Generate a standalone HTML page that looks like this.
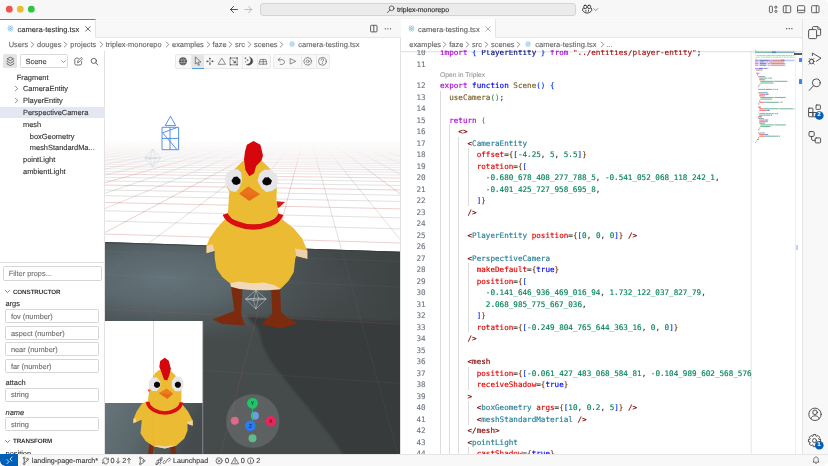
<!DOCTYPE html>
<html lang="en">
<head>
<meta charset="utf-8">
<title>camera-testing.tsx - triplex-monorepo</title>
<style>
*{box-sizing:border-box;margin:0;padding:0}
html,body{width:828px;height:466px;overflow:hidden;background:#fff}
body{position:relative;opacity:0.999;text-rendering:geometricPrecision;font-family:"Liberation Sans",sans-serif;font-size:7.3px;color:#3b3b3b}
.abs{position:absolute}
svg{overflow:visible}
.t{position:absolute;white-space:nowrap;line-height:10px;-webkit-text-stroke:0.12px currentColor}
#titlebar{left:0;top:0;width:828px;height:18.8px;background:linear-gradient(#f7f7f7 0,#f7f7f7 16.9px,#fcfcfc 17.3px,#fcfcfc 18.3px,#efefef 18.8px)}
.light{position:absolute;top:5.7px;width:6.8px;height:6.8px;border-radius:50%}
#search{left:259.5px;top:2.6px;width:316px;height:13.2px;background:#ebebeb;border:0.6px solid #d4d4d4;border-radius:3px}
#tabs{left:0;top:18.8px;width:802.3px;height:18.9px;background:#f8f8f8;border-bottom:0.6px solid #e5e5e5}
.tab{position:absolute;top:18.8px;height:19px;background:#fff;border-right:0.6px solid #e5e5e5}
#leftpanel{left:0;top:51px;width:105px;height:403px;background:#fff;border-right:0.6px solid #e2e2e2}
.inp{position:absolute;background:#fff;border:0.6px solid #d6d6d6;border-radius:1.5px}
#status{left:0;top:453.8px;width:828px;height:12.2px;background:#f8f8f8;border-top:0.6px solid #e5e5e5}
#activity{left:802.2px;top:18.8px;width:26px;height:435.2px;background:#f8f8f8;border-left:0.6px solid #e5e5e5}
#editor{left:401px;top:50.2px;width:401.3px;height:403.8px;background:#fff;overflow:hidden}
#edin{position:absolute;left:-401px;top:-50.2px;width:828px;height:466px}
.code{position:absolute;left:440px;white-space:pre;font-family:"DejaVu Sans Mono","Liberation Mono",monospace;font-size:7.62px;line-height:11.5px;height:11.5px;color:#3b3b3b;-webkit-text-stroke:0.15px currentColor}
.ln{position:absolute;left:401px;width:24.6px;text-align:right;font-family:"DejaVu Sans Mono","Liberation Mono",monospace;font-size:7.62px;line-height:11.5px;height:11.5px;color:#6e7681;-webkit-text-stroke:0.1px currentColor}
.k{color:#af00db}.b{color:#0000ff}.f{color:#795e26}.s{color:#a31515}.v{color:#001080}.n{color:#098658}.g{color:#800000}.c{color:#267f99}.a{color:#e50000}.y{color:#0431fa}.p{color:#319331}.z{color:#7b3814}
#mm i{position:absolute;height:1.15px;opacity:0.9}
</style>
</head>
<body>
<!-- scene -->
<svg class="abs" style="left:105px;top:51px;overflow:hidden" width="295.5" height="403" viewBox="105 51 295.5 403">
<defs>
<linearGradient id="fog" x1="0" y1="0" x2="0" y2="1" gradientUnits="objectBoundingBox">
<stop offset="0.000" stop-color="#fff" stop-opacity="1.00"/><stop offset="0.286" stop-color="#fff" stop-opacity="1.00"/><stop offset="0.371" stop-color="#fff" stop-opacity="0.94"/><stop offset="0.457" stop-color="#fff" stop-opacity="0.82"/><stop offset="0.571" stop-color="#fff" stop-opacity="0.58"/><stop offset="0.714" stop-color="#fff" stop-opacity="0.28"/><stop offset="0.857" stop-color="#fff" stop-opacity="0.08"/><stop offset="1.000" stop-color="#fff" stop-opacity="0.00"/>
</linearGradient>
<radialGradient id="fl" cx="165" cy="279" r="185" gradientUnits="userSpaceOnUse" gradientTransform="translate(165 279) scale(1 0.36) translate(-165 -279)">
<stop offset="0" stop-color="#64737a"/><stop offset="0.35" stop-color="#5b686d"/><stop offset="0.62" stop-color="#4f595c"/><stop offset="0.9" stop-color="#474d4e"/><stop offset="1" stop-color="#454a4b"/>
</radialGradient>
<linearGradient id="fl3" x1="300" y1="0" x2="400" y2="0" gradientUnits="userSpaceOnUse"><stop offset="0" stop-color="#000" stop-opacity="0"/><stop offset="1" stop-color="#000" stop-opacity="0.1"/></linearGradient>
<radialGradient id="fl2" cx="335" cy="285" r="80" gradientUnits="userSpaceOnUse" gradientTransform="translate(335 285) scale(1 0.5) translate(-335 -285)">
<stop offset="0" stop-color="#4a5153" stop-opacity="0.8"/><stop offset="1" stop-color="#444849" stop-opacity="0"/>
</radialGradient>
<filter id="bl" x="-20%" y="-20%" width="140%" height="140%"><feGaussianBlur stdDeviation="1.1"/></filter>
<clipPath id="flc"><polygon points="105,242.1 400.5,251.7 400.5,454 105,454"/></clipPath>
</defs>
<rect x="105" y="51" width="296" height="403" fill="#fff"/>
<path d="M-1910.9 176.1L93.0 129.9M-1899.3 176.5L95.5 129.9M-1875.8 177.3L100.5 129.9M-1863.7 177.7L103.0 129.9M-1839.1 178.5L108.1 130.0M-1826.5 178.9L110.6 130.0M-1800.6 179.7L115.7 130.0M-1787.4 180.1L118.2 130.0M-1760.4 181.0L123.3 130.0M-1746.5 181.5L125.9 130.0M-1718.2 182.4L131.0 130.0M-1703.6 182.9L133.6 130.0M-1673.8 183.8L138.7 130.0M-1658.6 184.3L141.3 130.0M-1627.2 185.3L146.4 130.0M-1611.1 185.9L149.0 130.0M-1578.1 186.9L154.2 130.0M-1561.2 187.5L156.8 130.0M-1526.4 188.6L162.0 130.0M-1508.5 189.2L164.6 130.0M-1471.8 190.4L169.9 130.0M-1452.9 191.0L172.5 130.0M-1414.0 192.3L177.7 130.1M-1394.0 192.9L180.4 130.1M-1352.9 194.2L185.6 130.1M-1331.7 194.9L188.3 130.1M-1288.0 196.4L193.6 130.1M-1265.5 197.1L196.2 130.1M-1219.1 198.6L201.5 130.1M-1195.1 199.4L204.2 130.1M-1145.7 201.0L209.6 130.1M-1120.1 201.8L212.2 130.1M-1067.3 203.5L217.6 130.1M-1040.0 204.4L220.3 130.1M-983.6 206.2L225.7 130.1M-954.4 207.2L228.4 130.1M-893.8 209.1L233.8 130.1M-862.5 210.2L236.5 130.1M-797.4 212.3L241.9 130.1M-763.7 213.4L244.7 130.1M-693.6 215.6L250.1 130.2M-657.1 216.8L252.9 130.2M-581.4 219.3L258.3 130.2M-541.9 220.6L261.1 130.2M-459.8 223.2L266.6 130.2M-416.9 224.6L269.4 130.2M-327.5 227.5L274.9 130.2M-280.9 229.0L277.7 130.2M-183.2 232.2L283.2 130.2M-132.2 233.9L286.0 130.2M-25.1 237.3L291.6 130.2M31.0 239.2L294.4 130.2M148.9 243.0L300.0 130.2M210.8 245.0L302.8 130.2M341.3 249.2L308.4 130.2M410.0 251.5L311.3 130.2M555.2 256.2L316.9 130.2M632.0 258.7L319.8 130.2M794.5 263.9L325.4 130.3M880.7 266.7L328.3 130.3M1063.8 272.7L334.0 130.3M1161.3 275.8L336.9 130.3M1369.4 282.6L342.6 130.3M1480.5 286.2L345.5 130.3M1718.9 293.9L351.2 130.3M1846.8 298.1L354.1 130.3M2122.6 307.0L359.9 130.3M2271.4 311.9L362.8 130.3M2594.2 322.3L368.6 130.3M2769.5 328.0L371.5 130.3M3152.3 340.4L377.4 130.3M3361.9 347.2L380.3 130.3M3823.3 362.2L386.2 130.3M4078.2 370.5L389.1 130.3M4645.2 388.9L395.0 130.4M4961.8 399.1L397.9 130.4M5675.2 422.3L403.9 130.4M6079.1 435.4L406.8 130.4M7004.0 465.4L412.8 130.4M100.0 220.87L405.0 229.02M100.0 210.63L405.0 217.91M100.0 195.56L405.0 201.56M100.0 189.85L405.0 195.37M100.0 180.82L405.0 185.57M100.0 177.19L405.0 181.63M100.0 171.18L405.0 175.10M100.0 168.66L405.0 172.38M100.0 164.38L405.0 167.72M100.0 162.53L405.0 165.72M100.0 159.32L405.0 162.24M100.0 157.91L405.0 160.71M100.0 155.41L405.0 158.00M100.0 154.30L405.0 156.79M100.0 152.31L405.0 154.63M100.0 151.41L405.0 153.65M100.0 149.78L405.0 151.88M100.0 149.03L405.0 151.08M100.0 147.67L405.0 149.60M100.0 147.05L405.0 148.93M100.0 145.90L405.0 147.68M100.0 145.37L405.0 147.10M100.0 144.38L405.0 146.03M100.0 143.93L405.0 145.54M100.0 143.07L405.0 144.61M100.0 142.68L405.0 144.18M100.0 141.93L405.0 143.37M100.0 141.58L405.0 142.99M100.0 140.92L405.0 142.27M100.0 140.61L405.0 141.94M100.0 140.03L405.0 141.30M100.0 139.75L405.0 141.00M100.0 139.23L405.0 140.44M100.0 138.98L405.0 140.17M100.0 138.51L405.0 139.66M100.0 138.28L405.0 139.41M100.0 137.86L405.0 138.95M100.0 137.65L405.0 138.73M100.0 137.27L405.0 138.31M100.0 137.08L405.0 138.11M100.0 136.73L405.0 137.73M100.0 136.56L405.0 137.54M100.0 136.24L405.0 137.19M100.0 136.08L405.0 137.02M100.0 135.78L405.0 136.70M100.0 135.64L405.0 136.54M100.0 135.36L405.0 136.25M100.0 135.23L405.0 136.10M100.0 134.98L405.0 135.83M100.0 134.85L405.0 135.69M100.0 134.62L405.0 135.44M100.0 134.50L405.0 135.31M100.0 134.28L405.0 135.07M100.0 134.18L405.0 134.96M100.0 133.97L405.0 134.74M100.0 133.87L405.0 134.63M100.0 133.68L405.0 134.42M100.0 133.59L405.0 134.32M100.0 133.41L405.0 134.12M100.0 133.32L405.0 134.03M100.0 133.15L405.0 133.84M100.0 133.07L405.0 133.76M100.0 132.91L405.0 133.58M100.0 132.83L405.0 133.50M100.0 132.68L405.0 133.34M100.0 132.61L405.0 133.26M100.0 132.47L405.0 133.10M100.0 132.40L405.0 133.03M100.0 132.27L405.0 132.88M100.0 132.20L405.0 132.81M100.0 132.07L405.0 132.67M100.0 132.01L405.0 132.61M100.0 131.89L405.0 132.48M100.0 131.83L405.0 132.41M100.0 131.72L405.0 132.29M100.0 131.66L405.0 132.23M100.0 131.55L405.0 132.11M100.0 131.50L405.0 132.05M100.0 131.40L405.0 131.94M100.0 131.35L405.0 131.88" stroke="#868686" stroke-width="0.36" fill="none" opacity="0.7"/>
<path d="M-1922.2 175.8L90.5 129.9M-1887.6 176.9L98.0 129.9M-1851.5 178.1L105.6 130.0M-1813.6 179.3L113.1 130.0M-1774.0 180.6L120.8 130.0M-1732.5 181.9L128.4 130.0M-1688.9 183.3L136.1 130.0M-1643.0 184.8L143.9 130.0M-1594.8 186.4L151.6 130.0M-1544.0 188.0L159.4 130.0M-1490.3 189.8L167.2 130.0M-1433.7 191.6L175.1 130.0M-1373.7 193.6L183.0 130.1M-1310.1 195.6L190.9 130.1M-1242.5 197.8L198.9 130.1M-1170.6 200.2L206.9 130.1M-1094.0 202.6L214.9 130.1M-1012.1 205.3L223.0 130.1M-924.5 208.1L231.1 130.1M-830.4 211.2L239.2 130.1M-729.1 214.5L247.4 130.1M-619.8 218.0L255.6 130.2M-501.4 221.9L263.8 130.2M-372.9 226.0L272.1 130.2M-232.8 230.6L280.4 130.2M-79.5 235.6L288.8 130.2M89.0 241.0L297.2 130.2M274.9 247.1L305.6 130.2M481.3 253.8L314.1 130.2M711.6 261.2L322.6 130.3M970.4 269.6L331.1 130.3M1263.1 279.1L339.7 130.3M1596.9 290.0L348.3 130.3M1981.2 302.4L357.0 130.3M2428.4 316.9L365.7 130.3M2955.2 334.0L374.4 130.3M3585.1 354.5L383.2 130.3M4351.4 379.3L392.0 130.3M5304.0 410.3L400.9 130.4M6520.2 449.7L409.8 130.4M100.0 233.89L405.0 243.15M100.0 202.37L405.0 208.95M100.0 185.00L405.0 190.10M100.0 174.00L405.0 178.17M100.0 166.41L405.0 169.93M100.0 160.85L405.0 163.90M100.0 156.61L405.0 159.30M100.0 153.27L405.0 155.67M100.0 150.57L405.0 152.74M100.0 148.33L405.0 150.32M100.0 146.46L405.0 148.28M100.0 144.87L405.0 146.55M100.0 143.49L405.0 145.06M100.0 142.29L405.0 143.76M100.0 141.24L405.0 142.62M100.0 140.31L405.0 141.61M100.0 139.48L405.0 140.71M100.0 138.74L405.0 139.91M100.0 138.07L405.0 139.18M100.0 137.46L405.0 138.52M100.0 136.90L405.0 137.92M100.0 136.40L405.0 137.36M100.0 135.93L405.0 136.86M100.0 135.50L405.0 136.39M100.0 135.10L405.0 135.96M100.0 134.74L405.0 135.56M100.0 134.39L405.0 135.19M100.0 134.07L405.0 134.85M100.0 133.78L405.0 134.52M100.0 133.50L405.0 134.22M100.0 133.24L405.0 133.94M100.0 132.99L405.0 133.67M100.0 132.76L405.0 133.42M100.0 132.54L405.0 133.18M100.0 132.33L405.0 132.96M100.0 132.14L405.0 132.74M100.0 131.95L405.0 132.54M100.0 131.77L405.0 132.35M100.0 131.61L405.0 132.17M100.0 131.45L405.0 132.00" stroke="#c25050" stroke-width="0.42" fill="none" opacity="0.66"/>
<rect x="105" y="120" width="296" height="70" fill="url(#fog)"/>
<polygon points="105,242.1 400.5,251.7 400.5,454 105,454" fill="#454a4b"/>
<g clip-path="url(#flc)">
<rect x="105" y="235" width="296" height="220" fill="url(#fl)"/>
<rect x="105" y="235" width="296" height="220" fill="url(#fl2)"/>
<rect x="300" y="235" width="101" height="90" fill="url(#fl3)"/>
<polygon points="247.0,316.6 252.0,322.0 258.0,328.0 261.0,337.0 262.5,345.0 270.0,360.0 280.4,373.7 295.0,392.0 310.6,410.6 334.0,440.7 346.0,458.0 406.0,458.0 406.0,321.8 290.0,318.3" fill="#393a3a" filter="url(#bl)"/>
<path d="M-329.9 227.9L-1374.9 396.7M-283.1 229.4L-1290.1 407.6M-185.1 232.6L-1098.4 432.3M-133.9 234.3L-989.4 446.3M-26.5 237.8L-738.5 478.6M29.9 239.6L-593.2 497.3M148.2 243.5L-251.0 541.3M210.4 245.5L-47.6 567.5M341.5 249.8L446.7 631.1M410.5 252.0L751.4 670.3M556.4 256.8L1528.1 770.2M633.5 259.3L2034.0 835.3M796.9 264.6L3429.3 1014.8M883.6 267.4L4429.8 1143.5M1067.9 273.5L7652.3 1558.1M1166.0 276.6L10498.7 1924.3M100.0 464.22L405.0 493.06M100.0 363.37L405.0 383.64M100.0 274.49L405.0 287.20M100.0 251.00L405.0 261.71" stroke="#9aa4a6" stroke-width="0.4" fill="none" opacity="0.2"/>
<path d="M-375.3 226.4L-1453.4 386.6M-234.8 231.0L-1198.2 419.5M-81.0 236.0L-869.9 461.7M88.1 241.5L-431.6 518.1M274.8 247.6L183.0 597.2M482.1 254.4L1107.1 716.1M713.6 261.9L2653.4 915.0M973.8 270.4L5768.5 1315.8M100.0 308.75L405.0 324.37" stroke="#a8605c" stroke-width="0.45" fill="none" opacity="0.5"/>
<path d="M105 242.5L400.5 252.1" stroke="#353a3c" stroke-width="1" opacity="0.7"/>
</g>
<g stroke="#3b7cf0" stroke-width="0.85" fill="none" stroke-linejoin="round"><path d="M170.5 116.2L165.2 125.6H175.6Z"/><rect x="162" y="127.3" width="16.6" height="22.4"/><path d="M170 127.3V149.7M162 138.4H178.6M176.8 127.6L162.6 132.8L176.8 149.4"/></g>
<g stroke="#b8ccd8" stroke-width="0.45" fill="none" opacity="0.8"><path d="M152.6 149L144.8 158L152.6 167L160.8 158ZM144.8 158H160.8M152.6 149L150 158.8L152.6 167M152.6 149L155.6 157.4L152.6 167M144.8 158L150 158.8L160.8 158M144.8 158L155.6 157.4"/></g>
<polygon points="231,286 242.5,288.5 241.2,314.5 244.8,325.4 222.5,323.9 212.2,319.4 234.3,311" fill="#7d2b0e"/>
<polygon points="271.3,289.5 280.2,288.5 281,311.7 284.5,315.3 297.1,323.7 280.8,328.2 262,324.5 272.3,313.4" fill="#7d2b0e"/>
<g stroke="#e4e8ea" stroke-width="0.45" fill="none" opacity="0.9"><path d="M255.9 290.2L245.6 299L255.9 309L266.2 299ZM245.6 299H266.2M255.9 290.2L253.5 300.5L255.9 309M255.9 290.2L258.6 298L255.9 309M245.6 299L253.5 300.5L266.2 299M245.6 299L258.6 298L266.2 299"/></g>
<polygon points="276.5,201.3 285,202 279.2,207.6 277,208" fill="#e01616"/>
<polygon points="224.7,219.6 216.7,228.3 209.5,238.5 206.6,245.7 206.6,253.0 214.6,250.8 214.7,258.0 216.5,268.7 222.5,277.3 230.2,283.6 238.0,285.5 252.0,286.5 267.0,288.6 280.8,288.8 288.6,280.8 293.7,272.2 295.4,258.0 296.4,255.9 307.3,258.8 307.3,250.8 302.2,238.5 293.6,228.3 281.7,218.9" fill="#ebbb33"/>
<polygon points="230.2,283.3 238,281.6 251.7,283.3 263.7,282.5 274,285 280.8,288.8 279,289.6 267,290.2 253.4,290.2 239.6,289 231,286.8" fill="#f1d8b6"/>
<polygon points="206.6,245.7 212.4,244.3 214.6,250.8 206.6,253.2" fill="#efd2ad"/>
<polygon points="295,248.6 307.3,250.8 307.3,258.8 296.4,255.9" fill="#efd2ad"/>
<polygon points="236.3,167.5 243.0,160.7 262.3,161.2 269.6,168.2 276.8,189.0 276.4,200.0 278.3,211.0 280.0,216.0 253.0,226.0 226.0,216.0 228.0,211.7 229.0,195.0 229.5,191.9 226.1,185.6 228.0,176.0" fill="#ebbb33"/>
<path d="M225.2 214C227.8 222.6 244 227 253 227C263 227 278.2 223 280.8 214.2" stroke="#d90d12" stroke-width="5.3" fill="none" stroke-linecap="butt"/>
<polygon points="246.9,144.8 253.6,141.1 260.4,144.8 263.0,155.4 261.4,160.7 256.1,166.0 254.1,173.3 249.3,176.2 245.4,169.9 244.0,159.3 245.0,151.5" fill="#d5060c"/>
<polygon points="227.1,172.6 231.9,169.7 237.7,169.2 241.1,172.6 242.1,180.8 239.2,188.0 235.8,191.9 230.5,190.9 226.1,185.6 225.1,178.8" fill="#e6e6e8"/>
<polygon points="259.4,173.5 264.3,169.7 271.0,169.7 276.8,174.5 278.3,180.8 276.8,187.5 272.0,190.9 266.2,191.9 261.4,188.0 259.4,184.2 257.5,180.8" fill="#e6e6e8"/>
<polygon points="231.4,180.8 233.8,176.9 237.2,176.6 240.6,179.8 240.3,183.2 236.7,184.9 233.4,184.2" fill="#050505"/>
<polygon points="262.1,181.3 264.8,177.4 268.6,177.2 272.0,180.8 270.6,184.2 266.7,185.6 263.3,184.2" fill="#050505"/>
<polygon points="239.2,193.8 248.3,186.6 259.9,194.3 249.3,201.1" fill="#e66d17"/>
<polygon points="239.2,193.8 248.3,186.6 259.9,194.3 249,194.6" fill="#ea741a"/>
<g>
<rect x="105" y="321" width="97.7" height="133" fill="#fff"/>
<linearGradient id="pf" x1="0" y1="0" x2="1" y2="0.25"><stop offset="0" stop-color="#66757a"/><stop offset="0.45" stop-color="#5a676b"/><stop offset="1" stop-color="#454b4d"/></linearGradient>
<rect x="105" y="403" width="97.7" height="51" fill="url(#pf)"/>
<path d="M153.6 321V403" stroke="#b5b5b5" stroke-width="0.5"/>
<path d="M153.6 403V454" stroke="#9aa4a6" stroke-width="0.4" opacity="0.45"/>
<path d="M202.9 321V454" stroke="#9a9fa0" stroke-width="0.5" opacity="0.8"/>
<polygon points="149.5,444 154,445 152.9,454 148,454" fill="#7d2b0e"/>
<polygon points="170.7,446 174.6,445.5 176.6,454 170.6,454" fill="#7d2b0e"/>
<polygon points="146.9,401.2 141.8,403.7 136.6,411.5 133.4,419.2 133.4,423.3 141.8,419.8 140.5,433.4 145.6,441.1 153.4,446.3 164.9,448.4 176.5,445.6 184.3,438.5 187.5,430.8 187.5,423.7 192.7,425.8 192.7,420.5 188.1,411.5 181.7,403.7 164.0,398.0" fill="#ebbb33"/>
<polygon points="133.4,419.2 135.6,418 136.4,421.8 133.4,423.3" fill="#efd2ad"/>
<polygon points="187.5,421.6 192.7,420.5 192.7,425.8 187.5,423.7" fill="#efd2ad"/>
<polygon points="153.4,446.3 158,445.4 164.9,446.6 171,445.4 176.5,445.6 164.9,448.4" fill="#f1d8b6"/>
<polygon points="155.1,373.2 159.0,370.0 171.2,371.3 175.7,375.8 181.5,390.6 181.3,403.5 165.0,412.0 147.6,402.2 149.3,390.6 150.4,381.0" fill="#ebbb33"/>
<path d="M153.6 395V446" stroke="#d6a72b" stroke-width="0.4" opacity="0.6"/>
<polygon points="147.6,389.8 149.6,389.6 149.4,392.4" fill="#e01616"/>
<path d="M147.6 402C148.6 409 158 413 164.9 413C172 413 180.6 409 181.4 402.4" stroke="#d90d12" stroke-width="3.7" fill="none"/>
<polygon points="160.2,361.0 164.7,357.8 168.6,360.4 170.9,368.7 169.3,375.2 167.3,380.3 164.1,379.7 161.5,372.6 159.3,366.8" fill="#d5060c"/>
<polygon points="160.2,387.0 156.9,390.9 152.1,390.9 148.8,387.0 148.8,381.4 152.1,377.5 156.9,377.5 160.2,381.4" fill="#e6e6e8"/>
<polygon points="183.4,386.9 180.0,391.2 175.2,391.2 171.8,386.9 171.8,380.9 175.2,376.6 180.0,376.6 183.4,380.9" fill="#e6e6e8"/>
<polygon points="160.0,386.0 158.2,387.8 155.8,387.8 154.0,386.0 154.0,383.6 155.8,381.8 158.2,381.8 160.0,383.6" fill="#050505"/>
<polygon points="180.9,386.0 179.1,387.8 176.7,387.8 174.9,386.0 174.9,383.6 176.7,381.8 179.1,381.8 180.9,383.6" fill="#050505"/>
<polygon points="159,393.2 166.7,388.7 173.1,393.8 167.3,399" fill="#e66d17"/>
<polygon points="159,393.2 166.7,388.7 173.1,393.8 166.5,394" fill="#ef7c1c"/>
</g>
<circle cx="252.8" cy="421" r="26.7" fill="#fff" opacity="0.13"/>
<circle cx="254.9" cy="415.8" r="4" fill="#6d9be6"/>
<circle cx="234.8" cy="420.7" r="4" fill="#e2688a"/>
<circle cx="252.5" cy="438.3" r="4" fill="#5fbd8c"/>
<path d="M252.5 421V403.3" stroke="#22c46b" stroke-width="0.8"/>
<path d="M252.5 421.3H270.9" stroke="#e8265c" stroke-width="0.8"/>
<circle cx="252.5" cy="403.3" r="5.4" fill="#22c46b"/>
<circle cx="270.9" cy="421.3" r="5.3" fill="#e8265c"/>
<circle cx="250.3" cy="425.8" r="5.3" fill="#2b7bf2"/>
<text x="252.5" y="405.3" text-anchor="middle" fill="#0b5a2f" style="font-family:'Liberation Sans',sans-serif;font-size:5.4px;font-weight:bold">Y</text>
<text x="270.9" y="423.3" text-anchor="middle" fill="#7c0d2c" style="font-family:'Liberation Sans',sans-serif;font-size:5.4px;font-weight:bold">X</text>
<text x="250.3" y="427.8" text-anchor="middle" fill="#0d3a86" style="font-family:'Liberation Sans',sans-serif;font-size:5.4px;font-weight:bold">Z</text>
</svg>
<!-- editor -->
<div id="editor" class="abs"><div id="edin">
<div class="ln" style="top:47px">10</div>
<div class="code" style="top:47px"><span class="k">import</span> <span class="y">{</span> <span class="v">PlayerEntity</span> <span class="y">}</span> <span class="k">from</span> <span class="s">&quot;../entities/player-entity&quot;</span>;</div>
<div class="ln" style="top:59px">11</div>
<div class="ln" style="top:80px">12</div>
<div class="code" style="top:80px"><span class="k">export</span> <span class="b">function</span> <span class="f">Scene</span><span class="y">()</span> <span class="y">{</span></div>
<div class="ln" style="top:92px">13</div>
<div class="code" style="top:92px">  <span class="f">useCamera</span><span class="p">()</span>;</div>
<div class="ln" style="top:103px">14</div>
<div class="ln" style="top:115px">15</div>
<div class="code" style="top:115px">  <span class="k">return</span> <span class="p">(</span></div>
<div class="ln" style="top:126px">16</div>
<div class="code" style="top:126px">    <span class="g">&lt;&gt;</span></div>
<div class="ln" style="top:138px">17</div>
<div class="code" style="top:138px">      <span class="g">&lt;</span><span class="c">CameraEntity</span></div>
<div class="ln" style="top:149px">18</div>
<div class="code" style="top:149px">        <span class="a">offset</span>=<span class="z">{</span><span class="y">[</span><span class="n">-4.25</span>, <span class="n">5</span>, <span class="n">5.5</span><span class="y">]</span><span class="z">}</span></div>
<div class="ln" style="top:161px">19</div>
<div class="code" style="top:161px">        <span class="a">rotation</span>=<span class="z">{</span><span class="y">[</span></div>
<div class="ln" style="top:172px">20</div>
<div class="code" style="top:172px">          <span class="n">-0.680_678_408_277_788_5</span>, <span class="n">-0.541_052_068_118_242_1</span>,</div>
<div class="ln" style="top:184px">21</div>
<div class="code" style="top:184px">          <span class="n">-0.401_425_727_958_695_8</span>,</div>
<div class="ln" style="top:195px">22</div>
<div class="code" style="top:195px">        <span class="y">]</span><span class="z">}</span></div>
<div class="ln" style="top:207px">23</div>
<div class="code" style="top:207px">      <span class="g">/&gt;</span></div>
<div class="ln" style="top:218px">24</div>
<div class="ln" style="top:230px">25</div>
<div class="code" style="top:230px">      <span class="g">&lt;</span><span class="c">PlayerEntity</span> <span class="a">position</span>=<span class="z">{</span><span class="y">[</span><span class="n">0</span>, <span class="n">0</span>, <span class="n">0</span><span class="y">]</span><span class="z">}</span> <span class="g">/&gt;</span></div>
<div class="ln" style="top:241px">26</div>
<div class="ln" style="top:253px">27</div>
<div class="code" style="top:253px">      <span class="g">&lt;</span><span class="c">PerspectiveCamera</span></div>
<div class="ln" style="top:264px">28</div>
<div class="code" style="top:264px">        <span class="a">makeDefault</span>=<span class="z">{</span><span class="b">true</span><span class="z">}</span></div>
<div class="ln" style="top:276px">29</div>
<div class="code" style="top:276px">        <span class="a">position</span>=<span class="z">{</span><span class="y">[</span></div>
<div class="ln" style="top:287px">30</div>
<div class="code" style="top:287px">          <span class="n">-0.141_646_936_469_016_94</span>, <span class="n">1.732_122_037_827_79</span>,</div>
<div class="ln" style="top:299px">31</div>
<div class="code" style="top:299px">          <span class="n">2.068_985_775_667_036</span>,</div>
<div class="ln" style="top:310px">32</div>
<div class="code" style="top:310px">        <span class="y">]</span><span class="z">}</span></div>
<div class="ln" style="top:322px">33</div>
<div class="code" style="top:322px">        <span class="a">rotation</span>=<span class="z">{</span><span class="y">[</span><span class="n">-0.249_804_765_644_363_16</span>, <span class="n">0</span>, <span class="n">0</span><span class="y">]</span><span class="z">}</span></div>
<div class="ln" style="top:333px">34</div>
<div class="code" style="top:333px">      <span class="g">/&gt;</span></div>
<div class="ln" style="top:345px">35</div>
<div class="ln" style="top:356px">36</div>
<div class="code" style="top:356px">      <span class="g">&lt;mesh</span></div>
<div class="ln" style="top:368px">37</div>
<div class="code" style="top:368px">        <span class="a">position</span>=<span class="z">{</span><span class="y">[</span><span class="n">-0.061_427_483_068_584_81</span>, <span class="n">-0.104_989_602_568_576_53</span>, <span class="n">-3.5</span><span class="y">]</span><span class="z">}</span></div>
<div class="ln" style="top:379px">38</div>
<div class="code" style="top:379px">        <span class="a">receiveShadow</span>=<span class="z">{</span><span class="b">true</span><span class="z">}</span></div>
<div class="ln" style="top:391px">39</div>
<div class="code" style="top:391px">      <span class="g">&gt;</span></div>
<div class="ln" style="top:402px">40</div>
<div class="code" style="top:402px">        <span class="g">&lt;</span><span class="c">boxGeometry</span> <span class="a">args</span>=<span class="z">{</span><span class="y">[</span><span class="n">10</span>, <span class="n">0.2</span>, <span class="n">5</span><span class="y">]</span><span class="z">}</span> <span class="g">/&gt;</span></div>
<div class="ln" style="top:414px">41</div>
<div class="code" style="top:414px">        <span class="g">&lt;</span><span class="c">meshStandardMaterial</span> <span class="g">/&gt;</span></div>
<div class="ln" style="top:425px">42</div>
<div class="code" style="top:425px">      <span class="g">&lt;/mesh&gt;</span></div>
<div class="ln" style="top:437px">43</div>
<div class="code" style="top:437px">      <span class="g">&lt;</span><span class="c">pointLight</span></div>
<div class="ln" style="top:448px">44</div>
<div class="code" style="top:448px">        <span class="a">castShadow</span>=<span class="z">{</span><span class="b">true</span><span class="z">}</span></div>
<div class="abs" style="left:440.00px;top:90.71px;width:0.55px;height:368.35px;background:#dcdcdc"></div>
<div class="abs" style="left:449.18px;top:125.23px;width:0.55px;height:333.82px;background:#dcdcdc"></div>
<div class="abs" style="left:458.36px;top:136.74px;width:0.55px;height:322.32px;background:#dcdcdc"></div>
<div class="abs" style="left:467.54px;top:148.25px;width:0.55px;height:57.63px;background:#dcdcdc"></div>
<div class="abs" style="left:467.54px;top:263.33px;width:0.55px;height:69.14px;background:#dcdcdc"></div>
<div class="abs" style="left:467.54px;top:366.90px;width:0.55px;height:23.11px;background:#dcdcdc"></div>
<div class="abs" style="left:467.54px;top:401.42px;width:0.55px;height:23.11px;background:#dcdcdc"></div>
<div class="abs" style="left:467.54px;top:447.46px;width:0.55px;height:11.60px;background:#dcdcdc"></div>
<div class="t" style="left:440px;top:71px;font-size:6.7px;color:#999">Open in Triplex</div>
<div class="abs" style="left:752px;top:51px;width:50.3px;height:403px;background:#fff;box-shadow:-1px 0 2px rgba(0,0,0,0.10)"></div>
<svg class="abs" style="left:752px;top:48px" width="50" height="110" viewBox="752 48 50 110"><rect x="755" y="51.61" width="39.6" height="1.5" fill="#7d9dff" opacity="0.75"/><rect x="772" y="51.61" width="4" height="1.5" fill="#2f62ff" opacity="0.9"/><rect x="755" y="59.68" width="39.6" height="1.5" fill="#a9bcf8" opacity="0.8"/><rect x="781" y="59.68" width="3.4" height="1.5" fill="#3b6cff" opacity="0.9"/><rect x="755.00" y="50.25" width="1.59" height="0.85" fill="#72c472" opacity="0.75"/><rect x="755.53" y="51.86" width="0.53" height="0.85" fill="#72c472" opacity="0.75"/><rect x="756.59" y="51.86" width="4.78" height="0.85" fill="#72c472" opacity="0.75"/><rect x="761.90" y="51.86" width="1.59" height="0.85" fill="#72c472" opacity="0.75"/><rect x="764.03" y="51.86" width="3.72" height="0.85" fill="#72c472" opacity="0.75"/><rect x="768.27" y="51.86" width="4.25" height="0.85" fill="#72c472" opacity="0.75"/><rect x="773.05" y="51.86" width="1.59" height="0.85" fill="#72c472" opacity="0.75"/><rect x="775.18" y="51.86" width="3.19" height="0.85" fill="#72c472" opacity="0.75"/><rect x="778.89" y="51.86" width="4.78" height="0.85" fill="#72c472" opacity="0.75"/><rect x="784.21" y="51.86" width="2.12" height="0.85" fill="#72c472" opacity="0.75"/><rect x="786.86" y="51.86" width="3.19" height="0.85" fill="#72c472" opacity="0.75"/><rect x="790.58" y="51.86" width="2.12" height="0.85" fill="#72c472" opacity="0.75"/><rect x="793.23" y="51.86" width="1.06" height="0.85" fill="#72c472" opacity="0.75"/><rect x="755.53" y="53.48" width="0.53" height="0.85" fill="#72c472" opacity="0.75"/><rect x="755.53" y="55.09" width="0.53" height="0.85" fill="#72c472" opacity="0.75"/><rect x="756.59" y="55.09" width="2.12" height="0.85" fill="#72c472" opacity="0.75"/><rect x="759.25" y="55.09" width="3.19" height="0.85" fill="#72c472" opacity="0.75"/><rect x="762.97" y="55.09" width="2.12" height="0.85" fill="#72c472" opacity="0.75"/><rect x="765.62" y="55.09" width="1.06" height="0.85" fill="#72c472" opacity="0.75"/><rect x="767.21" y="55.09" width="4.25" height="0.85" fill="#72c472" opacity="0.75"/><rect x="771.99" y="55.09" width="2.66" height="0.85" fill="#72c472" opacity="0.75"/><rect x="775.18" y="55.09" width="1.59" height="0.85" fill="#72c472" opacity="0.75"/><rect x="777.30" y="55.09" width="3.72" height="0.85" fill="#72c472" opacity="0.75"/><rect x="781.55" y="55.09" width="3.72" height="0.85" fill="#72c472" opacity="0.75"/><rect x="785.80" y="55.09" width="2.66" height="0.85" fill="#72c472" opacity="0.75"/><rect x="788.98" y="55.09" width="1.06" height="0.85" fill="#72c472" opacity="0.75"/><rect x="790.58" y="55.09" width="1.59" height="0.85" fill="#72c472" opacity="0.75"/><rect x="792.70" y="55.09" width="1.80" height="0.85" fill="#72c472" opacity="0.75"/><rect x="755.53" y="56.70" width="0.53" height="0.85" fill="#72c472" opacity="0.75"/><rect x="756.59" y="56.70" width="2.12" height="0.85" fill="#72c472" opacity="0.75"/><rect x="759.25" y="56.70" width="1.06" height="0.85" fill="#72c472" opacity="0.75"/><rect x="760.84" y="56.70" width="1.59" height="0.85" fill="#72c472" opacity="0.75"/><rect x="762.97" y="56.70" width="2.12" height="0.85" fill="#72c472" opacity="0.75"/><rect x="765.62" y="56.70" width="4.78" height="0.85" fill="#72c472" opacity="0.75"/><rect x="770.93" y="56.70" width="1.06" height="0.85" fill="#72c472" opacity="0.75"/><rect x="772.52" y="56.70" width="2.12" height="0.85" fill="#72c472" opacity="0.75"/><rect x="775.18" y="56.70" width="3.19" height="0.85" fill="#72c472" opacity="0.75"/><rect x="778.89" y="56.70" width="2.12" height="0.85" fill="#72c472" opacity="0.75"/><rect x="781.55" y="56.70" width="1.59" height="0.85" fill="#72c472" opacity="0.75"/><rect x="783.67" y="56.70" width="2.66" height="0.85" fill="#72c472" opacity="0.75"/><rect x="786.86" y="56.70" width="2.66" height="0.85" fill="#72c472" opacity="0.75"/><rect x="790.05" y="56.70" width="2.66" height="0.85" fill="#72c472" opacity="0.75"/><rect x="793.23" y="56.70" width="1.27" height="0.85" fill="#72c472" opacity="0.75"/><rect x="755.53" y="58.31" width="1.06" height="0.85" fill="#72c472" opacity="0.75"/><rect x="755.00" y="59.83" width="3.19" height="1.10" fill="#dc7ff0"/><rect x="758.72" y="59.83" width="0.53" height="1.10" fill="#6a86ff"/><rect x="759.78" y="59.83" width="9.03" height="1.10" fill="#7a84c0"/><rect x="769.34" y="59.83" width="0.53" height="1.10" fill="#6a86ff"/><rect x="770.40" y="59.83" width="2.12" height="1.10" fill="#dc7ff0"/><rect x="773.05" y="59.83" width="10.09" height="1.10" fill="#d88a8a"/><rect x="783.14" y="59.83" width="0.53" height="1.10" fill="#9a9a9a"/><rect x="755.00" y="61.44" width="3.19" height="1.10" fill="#dc7ff0"/><rect x="758.72" y="61.44" width="0.53" height="1.10" fill="#6a86ff"/><rect x="759.78" y="61.44" width="4.78" height="1.10" fill="#7a84c0"/><rect x="765.09" y="61.44" width="0.53" height="1.10" fill="#6a86ff"/><rect x="766.15" y="61.44" width="2.12" height="1.10" fill="#dc7ff0"/><rect x="768.81" y="61.44" width="14.87" height="1.10" fill="#d88a8a"/><rect x="783.67" y="61.44" width="0.53" height="1.10" fill="#9a9a9a"/><rect x="755.00" y="63.05" width="3.19" height="1.10" fill="#dc7ff0"/><rect x="758.72" y="63.05" width="0.53" height="1.10" fill="#6a86ff"/><rect x="759.78" y="63.05" width="6.37" height="1.10" fill="#7a84c0"/><rect x="766.68" y="63.05" width="0.53" height="1.10" fill="#6a86ff"/><rect x="767.74" y="63.05" width="2.12" height="1.10" fill="#dc7ff0"/><rect x="770.40" y="63.05" width="14.34" height="1.10" fill="#d88a8a"/><rect x="784.74" y="63.05" width="0.53" height="1.10" fill="#9a9a9a"/><rect x="755.00" y="64.67" width="3.19" height="1.10" fill="#dc7ff0"/><rect x="758.72" y="64.67" width="0.53" height="1.10" fill="#6a86ff"/><rect x="759.78" y="64.67" width="6.37" height="1.10" fill="#7a84c0"/><rect x="766.68" y="64.67" width="0.53" height="1.10" fill="#6a86ff"/><rect x="767.74" y="64.67" width="2.12" height="1.10" fill="#dc7ff0"/><rect x="770.40" y="64.67" width="14.34" height="1.10" fill="#d88a8a"/><rect x="784.74" y="64.67" width="0.53" height="1.10" fill="#9a9a9a"/><rect x="755.00" y="67.89" width="3.19" height="1.10" fill="#dc7ff0"/><rect x="758.72" y="67.89" width="4.25" height="1.10" fill="#6d6dff"/><rect x="763.50" y="67.89" width="2.66" height="1.10" fill="#b09a6a"/><rect x="766.15" y="67.89" width="1.06" height="1.10" fill="#6a86ff"/><rect x="767.74" y="67.89" width="0.53" height="1.10" fill="#6a86ff"/><rect x="756.06" y="69.51" width="4.78" height="1.10" fill="#b09a6a"/><rect x="760.84" y="69.51" width="1.06" height="1.10" fill="#84c684"/><rect x="761.90" y="69.51" width="0.53" height="1.10" fill="#9a9a9a"/><rect x="756.06" y="72.73" width="3.19" height="1.10" fill="#dc7ff0"/><rect x="759.78" y="72.73" width="0.53" height="1.10" fill="#84c684"/><rect x="757.12" y="74.34" width="1.06" height="1.10" fill="#c46a6a"/><rect x="758.19" y="75.96" width="0.53" height="1.10" fill="#c46a6a"/><rect x="758.72" y="75.96" width="6.37" height="1.10" fill="#86b6c8"/><rect x="759.25" y="77.57" width="3.19" height="1.10" fill="#f27878"/><rect x="762.43" y="77.57" width="0.53" height="1.10" fill="#9a9a9a"/><rect x="762.97" y="77.57" width="0.53" height="1.10" fill="#b08f7c"/><rect x="763.50" y="77.57" width="0.53" height="1.10" fill="#6a86ff"/><rect x="764.03" y="77.57" width="2.66" height="1.10" fill="#74bd9c"/><rect x="766.68" y="77.57" width="0.53" height="1.10" fill="#9a9a9a"/><rect x="767.74" y="77.57" width="0.53" height="1.10" fill="#74bd9c"/><rect x="768.27" y="77.57" width="0.53" height="1.10" fill="#9a9a9a"/><rect x="769.34" y="77.57" width="1.59" height="1.10" fill="#74bd9c"/><rect x="770.93" y="77.57" width="0.53" height="1.10" fill="#6a86ff"/><rect x="771.46" y="77.57" width="0.53" height="1.10" fill="#b08f7c"/><rect x="759.25" y="79.18" width="4.25" height="1.10" fill="#f27878"/><rect x="763.50" y="79.18" width="0.53" height="1.10" fill="#9a9a9a"/><rect x="764.03" y="79.18" width="0.53" height="1.10" fill="#b08f7c"/><rect x="764.56" y="79.18" width="0.53" height="1.10" fill="#6a86ff"/><rect x="760.31" y="80.80" width="12.74" height="1.10" fill="#74bd9c"/><rect x="773.05" y="80.80" width="0.53" height="1.10" fill="#9a9a9a"/><rect x="774.12" y="80.80" width="12.74" height="1.10" fill="#74bd9c"/><rect x="786.86" y="80.80" width="0.53" height="1.10" fill="#9a9a9a"/><rect x="760.31" y="82.41" width="12.74" height="1.10" fill="#74bd9c"/><rect x="773.05" y="82.41" width="0.53" height="1.10" fill="#9a9a9a"/><rect x="759.25" y="84.02" width="0.53" height="1.10" fill="#6a86ff"/><rect x="759.78" y="84.02" width="0.53" height="1.10" fill="#b08f7c"/><rect x="758.19" y="85.64" width="1.06" height="1.10" fill="#c46a6a"/><rect x="758.19" y="88.86" width="0.53" height="1.10" fill="#c46a6a"/><rect x="758.72" y="88.86" width="6.37" height="1.10" fill="#86b6c8"/><rect x="765.62" y="88.86" width="4.25" height="1.10" fill="#f27878"/><rect x="769.87" y="88.86" width="0.53" height="1.10" fill="#9a9a9a"/><rect x="770.40" y="88.86" width="0.53" height="1.10" fill="#b08f7c"/><rect x="770.93" y="88.86" width="0.53" height="1.10" fill="#6a86ff"/><rect x="771.46" y="88.86" width="0.53" height="1.10" fill="#74bd9c"/><rect x="771.99" y="88.86" width="0.53" height="1.10" fill="#9a9a9a"/><rect x="773.05" y="88.86" width="0.53" height="1.10" fill="#74bd9c"/><rect x="773.58" y="88.86" width="0.53" height="1.10" fill="#9a9a9a"/><rect x="774.65" y="88.86" width="0.53" height="1.10" fill="#74bd9c"/><rect x="775.18" y="88.86" width="0.53" height="1.10" fill="#6a86ff"/><rect x="775.71" y="88.86" width="0.53" height="1.10" fill="#b08f7c"/><rect x="776.77" y="88.86" width="1.06" height="1.10" fill="#c46a6a"/><rect x="758.19" y="92.09" width="0.53" height="1.10" fill="#c46a6a"/><rect x="758.72" y="92.09" width="9.03" height="1.10" fill="#86b6c8"/><rect x="759.25" y="93.70" width="5.84" height="1.10" fill="#f27878"/><rect x="765.09" y="93.70" width="0.53" height="1.10" fill="#9a9a9a"/><rect x="765.62" y="93.70" width="0.53" height="1.10" fill="#b08f7c"/><rect x="766.15" y="93.70" width="2.12" height="1.10" fill="#6d6dff"/><rect x="768.27" y="93.70" width="0.53" height="1.10" fill="#b08f7c"/><rect x="759.25" y="95.31" width="4.25" height="1.10" fill="#f27878"/><rect x="763.50" y="95.31" width="0.53" height="1.10" fill="#9a9a9a"/><rect x="764.03" y="95.31" width="0.53" height="1.10" fill="#b08f7c"/><rect x="764.56" y="95.31" width="0.53" height="1.10" fill="#6a86ff"/><rect x="760.31" y="96.93" width="13.28" height="1.10" fill="#74bd9c"/><rect x="773.58" y="96.93" width="0.53" height="1.10" fill="#9a9a9a"/><rect x="774.65" y="96.93" width="10.62" height="1.10" fill="#74bd9c"/><rect x="785.27" y="96.93" width="0.53" height="1.10" fill="#9a9a9a"/><rect x="760.31" y="98.54" width="11.15" height="1.10" fill="#74bd9c"/><rect x="771.46" y="98.54" width="0.53" height="1.10" fill="#9a9a9a"/><rect x="759.25" y="100.15" width="0.53" height="1.10" fill="#6a86ff"/><rect x="759.78" y="100.15" width="0.53" height="1.10" fill="#b08f7c"/><rect x="759.25" y="101.77" width="4.25" height="1.10" fill="#f27878"/><rect x="763.50" y="101.77" width="0.53" height="1.10" fill="#9a9a9a"/><rect x="764.03" y="101.77" width="0.53" height="1.10" fill="#b08f7c"/><rect x="764.56" y="101.77" width="0.53" height="1.10" fill="#6a86ff"/><rect x="765.09" y="101.77" width="13.28" height="1.10" fill="#74bd9c"/><rect x="778.36" y="101.77" width="0.53" height="1.10" fill="#9a9a9a"/><rect x="779.43" y="101.77" width="0.53" height="1.10" fill="#74bd9c"/><rect x="779.96" y="101.77" width="0.53" height="1.10" fill="#9a9a9a"/><rect x="781.02" y="101.77" width="0.53" height="1.10" fill="#74bd9c"/><rect x="781.55" y="101.77" width="0.53" height="1.10" fill="#6a86ff"/><rect x="782.08" y="101.77" width="0.53" height="1.10" fill="#b08f7c"/><rect x="758.19" y="103.38" width="1.06" height="1.10" fill="#c46a6a"/><rect x="758.19" y="106.60" width="2.66" height="1.10" fill="#c46a6a"/><rect x="759.25" y="108.22" width="4.25" height="1.10" fill="#f27878"/><rect x="763.50" y="108.22" width="0.53" height="1.10" fill="#9a9a9a"/><rect x="764.03" y="108.22" width="0.53" height="1.10" fill="#b08f7c"/><rect x="764.56" y="108.22" width="0.53" height="1.10" fill="#6a86ff"/><rect x="765.09" y="108.22" width="13.28" height="1.10" fill="#74bd9c"/><rect x="778.36" y="108.22" width="0.53" height="1.10" fill="#9a9a9a"/><rect x="779.43" y="108.22" width="13.28" height="1.10" fill="#74bd9c"/><rect x="792.70" y="108.22" width="0.53" height="1.10" fill="#9a9a9a"/><rect x="793.76" y="108.22" width="0.74" height="1.10" fill="#74bd9c"/><rect x="759.25" y="109.83" width="6.90" height="1.10" fill="#f27878"/><rect x="766.15" y="109.83" width="0.53" height="1.10" fill="#9a9a9a"/><rect x="766.68" y="109.83" width="0.53" height="1.10" fill="#b08f7c"/><rect x="767.21" y="109.83" width="2.12" height="1.10" fill="#6d6dff"/><rect x="769.34" y="109.83" width="0.53" height="1.10" fill="#b08f7c"/><rect x="758.19" y="111.44" width="0.53" height="1.10" fill="#c46a6a"/><rect x="759.25" y="113.06" width="0.53" height="1.10" fill="#c46a6a"/><rect x="759.78" y="113.06" width="5.84" height="1.10" fill="#86b6c8"/><rect x="766.15" y="113.06" width="2.12" height="1.10" fill="#f27878"/><rect x="768.27" y="113.06" width="0.53" height="1.10" fill="#9a9a9a"/><rect x="768.81" y="113.06" width="0.53" height="1.10" fill="#b08f7c"/><rect x="769.34" y="113.06" width="0.53" height="1.10" fill="#6a86ff"/><rect x="769.87" y="113.06" width="1.06" height="1.10" fill="#74bd9c"/><rect x="770.93" y="113.06" width="0.53" height="1.10" fill="#9a9a9a"/><rect x="771.99" y="113.06" width="1.59" height="1.10" fill="#74bd9c"/><rect x="773.58" y="113.06" width="0.53" height="1.10" fill="#9a9a9a"/><rect x="774.65" y="113.06" width="0.53" height="1.10" fill="#74bd9c"/><rect x="775.18" y="113.06" width="0.53" height="1.10" fill="#6a86ff"/><rect x="775.71" y="113.06" width="0.53" height="1.10" fill="#b08f7c"/><rect x="776.77" y="113.06" width="1.06" height="1.10" fill="#c46a6a"/><rect x="759.25" y="114.67" width="0.53" height="1.10" fill="#c46a6a"/><rect x="759.78" y="114.67" width="10.62" height="1.10" fill="#86b6c8"/><rect x="770.93" y="114.67" width="1.06" height="1.10" fill="#c46a6a"/><rect x="758.19" y="116.28" width="3.72" height="1.10" fill="#c46a6a"/><rect x="758.19" y="117.90" width="0.53" height="1.10" fill="#c46a6a"/><rect x="758.72" y="117.90" width="5.31" height="1.10" fill="#86b6c8"/><rect x="759.25" y="119.51" width="5.31" height="1.10" fill="#f27878"/><rect x="764.56" y="119.51" width="0.53" height="1.10" fill="#9a9a9a"/><rect x="765.09" y="119.51" width="0.53" height="1.10" fill="#b08f7c"/><rect x="765.62" y="119.51" width="2.12" height="1.10" fill="#6d6dff"/><rect x="767.74" y="119.51" width="0.53" height="1.10" fill="#b08f7c"/><rect x="759.25" y="121.12" width="4.78" height="1.10" fill="#f27878"/><rect x="764.03" y="121.12" width="0.53" height="1.10" fill="#9a9a9a"/><rect x="764.56" y="121.12" width="0.53" height="1.10" fill="#b08f7c"/><rect x="765.09" y="121.12" width="2.12" height="1.10" fill="#74bd9c"/><rect x="767.21" y="121.12" width="0.53" height="1.10" fill="#b08f7c"/><rect x="759.25" y="122.73" width="4.25" height="1.10" fill="#f27878"/><rect x="763.50" y="122.73" width="0.53" height="1.10" fill="#9a9a9a"/><rect x="764.03" y="122.73" width="0.53" height="1.10" fill="#b08f7c"/><rect x="764.56" y="122.73" width="0.53" height="1.10" fill="#6a86ff"/><rect x="760.31" y="124.35" width="13.28" height="1.10" fill="#74bd9c"/><rect x="773.58" y="124.35" width="0.53" height="1.10" fill="#9a9a9a"/><rect x="774.65" y="124.35" width="10.62" height="1.10" fill="#74bd9c"/><rect x="785.27" y="124.35" width="0.53" height="1.10" fill="#9a9a9a"/><rect x="760.31" y="125.96" width="9.56" height="1.10" fill="#74bd9c"/><rect x="769.87" y="125.96" width="0.53" height="1.10" fill="#9a9a9a"/><rect x="759.25" y="127.57" width="0.53" height="1.10" fill="#6a86ff"/><rect x="759.78" y="127.57" width="0.53" height="1.10" fill="#b08f7c"/><rect x="758.19" y="129.19" width="1.06" height="1.10" fill="#c46a6a"/><rect x="758.19" y="132.41" width="0.53" height="1.10" fill="#c46a6a"/><rect x="758.72" y="132.41" width="6.37" height="1.10" fill="#86b6c8"/><rect x="759.25" y="134.03" width="5.31" height="1.10" fill="#f27878"/><rect x="764.56" y="134.03" width="0.53" height="1.10" fill="#9a9a9a"/><rect x="765.09" y="134.03" width="0.53" height="1.10" fill="#b08f7c"/><rect x="765.62" y="134.03" width="2.12" height="1.10" fill="#6d6dff"/><rect x="767.74" y="134.03" width="0.53" height="1.10" fill="#b08f7c"/><rect x="759.25" y="135.64" width="4.78" height="1.10" fill="#f27878"/><rect x="764.03" y="135.64" width="0.53" height="1.10" fill="#9a9a9a"/><rect x="764.56" y="135.64" width="0.53" height="1.10" fill="#b08f7c"/><rect x="765.09" y="135.64" width="12.74" height="1.10" fill="#74bd9c"/><rect x="777.83" y="135.64" width="0.53" height="1.10" fill="#b08f7c"/><rect x="778.89" y="135.64" width="1.06" height="1.10" fill="#6a86ff"/><rect x="758.19" y="137.25" width="1.06" height="1.10" fill="#c46a6a"/><rect x="757.12" y="138.87" width="1.59" height="1.10" fill="#c46a6a"/><rect x="756.06" y="140.48" width="0.53" height="1.10" fill="#84c684"/><rect x="756.59" y="140.48" width="0.53" height="1.10" fill="#9a9a9a"/><rect x="755.00" y="142.09" width="0.53" height="1.10" fill="#6a86ff"/></svg>
<div class="abs" style="left:794.6px;top:51px;width:0.6px;height:403px;background:#f0f0f0"></div>
<div class="abs" style="left:799.1px;top:57.9px;width:2.7px;height:4.5px;background:#3b82f6;border-radius:0.5px"></div>
<div class="abs" style="left:799.1px;top:79.1px;width:2.7px;height:4.8px;background:#3b82f6;border-radius:0.5px"></div>
<div class="abs" style="left:796.4px;top:245px;width:1.6px;height:5px;background:#bcd3f5"></div>
<div class="abs" style="left:794.2px;top:53.2px;width:7.6px;height:1.5px;background:#5a5a5a"></div>
</div></div>
<div class="abs" style="left:401px;top:51px;width:401px;height:2.4px;background:linear-gradient(rgba(0,0,0,0.13),rgba(0,0,0,0))"></div>
<div class="abs" style="left:400.4px;top:18.8px;width:0.7px;height:435px;background:#e2e2e2"></div>
<!-- chrome -->
<div id="titlebar" class="abs"></div>
<svg class="abs" style="left:0;top:0" width="40" height="19" viewBox="0 0 40 19"><circle cx="9.3" cy="9.2" r="3.4" fill="#ef5350"/><circle cx="20.3" cy="9.2" r="3.4" fill="#ecbc2e"/><circle cx="31.3" cy="9.2" r="3.4" fill="#2cc63f"/></svg>
<div id="search" class="abs"></div>
<svg class="abs" style="left:228px;top:4px" width="28" height="11" viewBox="228 4 28 11" fill="none" stroke-linecap="round" stroke-linejoin="round"><path d="M237.4 9.5H230.6M233.6 6.4L230.5 9.5L233.6 12.6" stroke="#3b3b3b" stroke-width="0.9"/><path d="M244.8 9.5H251.6M248.6 6.4L251.7 9.5L248.6 12.6" stroke="#b5b5b5" stroke-width="0.9"/></svg>
<svg class="abs" style="left:386px;top:4px" width="10" height="11" viewBox="386 4 10 11" fill="none" stroke="#3b3b3b" stroke-width="0.75" stroke-linecap="round"><circle cx="391.6" cy="8.3" r="2.4"/><path d="M389.9 10.1L387.4 12.7"/></svg>
<div class="t" style="left:397.00px;top:6px;font-size:6.95px;color:#2f2f2f;-webkit-text-stroke:0.15px #2f2f2f;">triplex-monorepo</div>
<svg class="abs" style="left:582px;top:4px" width="18" height="11" viewBox="582 4 18 11"><g fill="none" stroke="#2b2b2b" stroke-width="0.95" stroke-linejoin="round" stroke-linecap="round"><rect x="583.7" y="5.3" width="3.1" height="3.2" rx="1.3"/><rect x="587.6" y="5.3" width="3.1" height="3.2" rx="1.3"/><path d="M583.1 8.3C582.7 8.8 582.6 9.4 582.7 10.6C583.8 12.2 585.6 13 587.2 13C588.8 13 590.6 12.2 591.7 10.6C591.8 9.4 591.7 8.8 591.3 8.3"/><path d="M585.9 10.1V11.2M588.5 10.1V11.2" stroke-width="0.85"/></g><path d="M593.8 8.6L595.8 10.6L597.8 8.6" fill="none" stroke="#555" stroke-width="0.7" stroke-linecap="round" stroke-linejoin="round"/></svg>
<svg class="abs" style="left:768px;top:4px" width="54" height="11" viewBox="768 4 54 11" fill="none" stroke="#3b3b3b" stroke-width="0.8" stroke-linejoin="round"><rect x="769.4" y="6.2" width="3" height="6.3" rx="0.8"/><circle cx="775.9" cy="7.2" r="1.1"/><circle cx="775.9" cy="11.4" r="1.1"/><rect x="783.3" y="5.7" width="7.4" height="7" rx="1"/><path d="M786 5.7V12.7"/><rect x="797.5" y="5.7" width="7.2" height="7" rx="1"/><path d="M797.5 10.3H804.7"/><rect x="811.6" y="5.7" width="7.4" height="7" rx="1"/><path d="M816.3 5.7V12.7"/></svg>
<div id="tabs" class="abs"></div>
<div class="tab" style="left:0;width:95.5px;border-top:1.2px solid #3d86d6"></div>
<svg class="abs" style="left:7.05px;top:25.35px" width="6.90" height="6.90" viewBox="-5 -5 10 10"><g fill="none" stroke="#56a6d6" stroke-width="0.62" opacity="0.78"><ellipse rx="4.7" ry="1.85"/><ellipse rx="4.7" ry="1.85" transform="rotate(60)"/><ellipse rx="4.7" ry="1.85" transform="rotate(120)"/></g><circle r="0.8" fill="#56a6d6"/></svg>
<div class="t" style="left:17.60px;top:25px;font-size:7.55px;color:#333;">camera-testing.tsx</div>
<svg class="abs" style="left:84px;top:25px" width="8" height="8" viewBox="0 0 8 8"><path d="M1.6 1.6L6.2 6.2M6.2 1.6L1.6 6.2" stroke="#3b3b3b" stroke-width="0.75" stroke-linecap="round"/></svg>
<div class="tab" style="left:401px;width:94.5px"></div>
<svg class="abs" style="left:407.85px;top:25.35px" width="6.90" height="6.90" viewBox="-5 -5 10 10"><g fill="none" stroke="#56a6d6" stroke-width="0.62" opacity="0.78"><ellipse rx="4.7" ry="1.85"/><ellipse rx="4.7" ry="1.85" transform="rotate(60)"/><ellipse rx="4.7" ry="1.85" transform="rotate(120)"/></g><circle r="0.8" fill="#56a6d6"/></svg>
<div class="t" style="left:418.00px;top:25px;font-size:7.55px;color:#5f5f5f;">camera-testing.tsx</div>
<svg class="abs" style="left:483.5px;top:24.6px" width="8" height="8" viewBox="0 0 8 8"><path d="M1.6 1.6L6.2 6.2M6.2 1.6L1.6 6.2" stroke="#8a8a8a" stroke-width="0.7" stroke-linecap="round"/></svg>
<svg class="abs" style="left:369px;top:24px" width="24" height="10" viewBox="369 24 24 10" fill="none" stroke="#3b3b3b" stroke-width="0.8"><rect x="370.6" y="25.3" width="6.4" height="6.6" rx="0.8"/><path d="M373.8 25.3V31.9"/><g fill="#3b3b3b" stroke="none"><circle cx="385.3" cy="28.8" r="0.65"/><circle cx="387.9" cy="28.8" r="0.65"/><circle cx="390.5" cy="28.8" r="0.65"/></g></svg>
<svg class="abs" style="left:784px;top:26px" width="10" height="6" viewBox="784 26 10 6"><g fill="#3b3b3b"><circle cx="786.7" cy="28.7" r="0.65"/><circle cx="789.3" cy="28.7" r="0.65"/><circle cx="791.9" cy="28.7" r="0.65"/></g></svg>
<div class="t" style="left:8.75px;top:40px;font-size:7.45px;color:#686868;">Users</div>
<svg class="abs" style="left:30.00px;top:41.00px" width="5" height="7" viewBox="-2.5 -3.5 5 7"><path d="M-1.1 -2.3L1.2 0L-1.1 2.3" fill="none" stroke="#6b6b6b" stroke-width="0.70" stroke-linecap="round" stroke-linejoin="round" transform="scale(1.10)"/></svg>
<div class="t" style="left:37.00px;top:40px;font-size:7.45px;color:#686868;">douges</div>
<svg class="abs" style="left:63.25px;top:41.00px" width="5" height="7" viewBox="-2.5 -3.5 5 7"><path d="M-1.1 -2.3L1.2 0L-1.1 2.3" fill="none" stroke="#6b6b6b" stroke-width="0.70" stroke-linecap="round" stroke-linejoin="round" transform="scale(1.10)"/></svg>
<div class="t" style="left:70.25px;top:40px;font-size:7.45px;color:#686868;">projects</div>
<svg class="abs" style="left:98.50px;top:41.00px" width="5" height="7" viewBox="-2.5 -3.5 5 7"><path d="M-1.1 -2.3L1.2 0L-1.1 2.3" fill="none" stroke="#6b6b6b" stroke-width="0.70" stroke-linecap="round" stroke-linejoin="round" transform="scale(1.10)"/></svg>
<div class="t" style="left:105.75px;top:40px;font-size:7.45px;color:#686868;">triplex-monorepo</div>
<svg class="abs" style="left:165.00px;top:41.00px" width="5" height="7" viewBox="-2.5 -3.5 5 7"><path d="M-1.1 -2.3L1.2 0L-1.1 2.3" fill="none" stroke="#6b6b6b" stroke-width="0.70" stroke-linecap="round" stroke-linejoin="round" transform="scale(1.10)"/></svg>
<div class="t" style="left:172.00px;top:40px;font-size:7.45px;color:#686868;">examples</div>
<svg class="abs" style="left:205.50px;top:41.00px" width="5" height="7" viewBox="-2.5 -3.5 5 7"><path d="M-1.1 -2.3L1.2 0L-1.1 2.3" fill="none" stroke="#6b6b6b" stroke-width="0.70" stroke-linecap="round" stroke-linejoin="round" transform="scale(1.10)"/></svg>
<div class="t" style="left:212.50px;top:40px;font-size:7.45px;color:#686868;">faze</div>
<svg class="abs" style="left:228.00px;top:41.00px" width="5" height="7" viewBox="-2.5 -3.5 5 7"><path d="M-1.1 -2.3L1.2 0L-1.1 2.3" fill="none" stroke="#6b6b6b" stroke-width="0.70" stroke-linecap="round" stroke-linejoin="round" transform="scale(1.10)"/></svg>
<div class="t" style="left:235.00px;top:40px;font-size:7.45px;color:#686868;">src</div>
<svg class="abs" style="left:246.75px;top:41.00px" width="5" height="7" viewBox="-2.5 -3.5 5 7"><path d="M-1.1 -2.3L1.2 0L-1.1 2.3" fill="none" stroke="#6b6b6b" stroke-width="0.70" stroke-linecap="round" stroke-linejoin="round" transform="scale(1.10)"/></svg>
<div class="t" style="left:254.00px;top:40px;font-size:7.45px;color:#686868;">scenes</div>
<svg class="abs" style="left:279.25px;top:41.00px" width="5" height="7" viewBox="-2.5 -3.5 5 7"><path d="M-1.1 -2.3L1.2 0L-1.1 2.3" fill="none" stroke="#6b6b6b" stroke-width="0.70" stroke-linecap="round" stroke-linejoin="round" transform="scale(1.10)"/></svg>
<svg class="abs" style="left:288.80px;top:41.20px" width="6.20" height="6.20" viewBox="-5 -5 10 10"><g fill="none" stroke="#56a6d6" stroke-width="0.62" opacity="0.78"><ellipse rx="4.7" ry="1.85"/><ellipse rx="4.7" ry="1.85" transform="rotate(60)"/><ellipse rx="4.7" ry="1.85" transform="rotate(120)"/></g><circle r="0.8" fill="#56a6d6"/></svg>
<div class="t" style="left:298.25px;top:40px;font-size:7.50px;color:#686868;">camera-testing.tsx</div>
<div class="t" style="left:409.25px;top:40px;font-size:7.45px;color:#686868;">examples</div>
<svg class="abs" style="left:442.25px;top:41.00px" width="5" height="7" viewBox="-2.5 -3.5 5 7"><path d="M-1.1 -2.3L1.2 0L-1.1 2.3" fill="none" stroke="#6b6b6b" stroke-width="0.70" stroke-linecap="round" stroke-linejoin="round" transform="scale(1.10)"/></svg>
<div class="t" style="left:449.25px;top:40px;font-size:7.45px;color:#686868;">faze</div>
<svg class="abs" style="left:465.00px;top:41.00px" width="5" height="7" viewBox="-2.5 -3.5 5 7"><path d="M-1.1 -2.3L1.2 0L-1.1 2.3" fill="none" stroke="#6b6b6b" stroke-width="0.70" stroke-linecap="round" stroke-linejoin="round" transform="scale(1.10)"/></svg>
<div class="t" style="left:472.00px;top:40px;font-size:7.45px;color:#686868;">src</div>
<svg class="abs" style="left:484.00px;top:41.00px" width="5" height="7" viewBox="-2.5 -3.5 5 7"><path d="M-1.1 -2.3L1.2 0L-1.1 2.3" fill="none" stroke="#6b6b6b" stroke-width="0.70" stroke-linecap="round" stroke-linejoin="round" transform="scale(1.10)"/></svg>
<div class="t" style="left:491.00px;top:40px;font-size:7.45px;color:#686868;">scenes</div>
<svg class="abs" style="left:516.25px;top:41.00px" width="5" height="7" viewBox="-2.5 -3.5 5 7"><path d="M-1.1 -2.3L1.2 0L-1.1 2.3" fill="none" stroke="#6b6b6b" stroke-width="0.70" stroke-linecap="round" stroke-linejoin="round" transform="scale(1.10)"/></svg>
<svg class="abs" style="left:525.40px;top:41.20px" width="6.20" height="6.20" viewBox="-5 -5 10 10"><g fill="none" stroke="#56a6d6" stroke-width="0.62" opacity="0.78"><ellipse rx="4.7" ry="1.85"/><ellipse rx="4.7" ry="1.85" transform="rotate(60)"/><ellipse rx="4.7" ry="1.85" transform="rotate(120)"/></g><circle r="0.8" fill="#56a6d6"/></svg>
<div class="t" style="left:535.25px;top:40px;font-size:7.50px;color:#686868;">camera-testing.tsx</div>
<svg class="abs" style="left:599.50px;top:41.00px" width="5" height="7" viewBox="-2.5 -3.5 5 7"><path d="M-1.1 -2.3L1.2 0L-1.1 2.3" fill="none" stroke="#6b6b6b" stroke-width="0.70" stroke-linecap="round" stroke-linejoin="round" transform="scale(1.10)"/></svg>
<div class="t" style="left:606.30px;top:40px;font-size:7.40px;color:#686868;">...</div>
<div id="leftpanel" class="abs"></div>
<div class="abs" style="left:3.4px;top:54px;width:13.7px;height:13.6px;background:#e4e4e4;border-radius:1.5px"></div>
<svg class="abs" style="left:5px;top:55.5px" width="11" height="11" viewBox="0 0 11 11" fill="none" stroke="#4a4a4a" stroke-width="0.75" stroke-linejoin="round"><path d="M5.3 1.2L8.6 2.9L5.3 4.6L2 2.9Z"/><path d="M2 4.4V5.4L5.3 7.1L8.6 5.4V4.4"/><path d="M2 6.9V7.9L5.3 9.6L8.6 7.9V6.9"/></svg>
<div class="abs" style="left:19.8px;top:53.6px;width:48.6px;height:14px;background:#fff;border:0.6px solid #d9d9d9;border-radius:1.5px"></div>
<div class="t" style="left:25.60px;top:57px;font-size:7.40px;color:#3b3b3b;">Scene</div>
<svg class="abs" style="left:59.80px;top:59.00px" width="7" height="5" viewBox="-3.5 -2.5 7 5"><path d="M-2.2 -1.1L0 1.1L2.2 -1.1" fill="none" stroke="#4a4a4a" stroke-width="0.70" stroke-linecap="round" stroke-linejoin="round" transform="scale(0.85)"/></svg>
<svg class="abs" style="left:73px;top:55.5px" width="11" height="11" viewBox="0 0 11 11" fill="none" stroke="#444" stroke-width="0.75" stroke-linecap="round" stroke-linejoin="round"><path d="M5.4 2.2H3.2C2.4 2.2 1.8 2.8 1.8 3.6V7.6C1.8 8.4 2.4 9 3.2 9H7.2C8 9 8.6 8.4 8.6 7.6V5.6"/><path d="M4.6 6.3L5 4.6L8.2 1.4L9.5 2.7L6.3 5.9Z"/></svg>
<svg class="abs" style="left:89px;top:55.5px" width="11" height="11" viewBox="0 0 11 11" fill="none" stroke="#444" stroke-width="0.8" stroke-linecap="round"><circle cx="4.8" cy="4.9" r="2.6"/><path d="M6.8 6.9L8.9 9"/></svg>
<div class="t" style="left:16.70px;top:73px;font-size:7.45px;color:#333;">Fragment</div>
<svg class="abs" style="left:13.50px;top:85.40px" width="5" height="7" viewBox="-2.5 -3.5 5 7"><path d="M-1.1 -2.3L1.2 0L-1.1 2.3" fill="none" stroke="#555" stroke-width="0.70" stroke-linecap="round" stroke-linejoin="round" transform="scale(1.00)"/></svg>
<div class="t" style="left:23.00px;top:84px;font-size:7.45px;color:#333;">CameraEntity</div>
<svg class="abs" style="left:13.50px;top:97.20px" width="5" height="7" viewBox="-2.5 -3.5 5 7"><path d="M-1.1 -2.3L1.2 0L-1.1 2.3" fill="none" stroke="#555" stroke-width="0.70" stroke-linecap="round" stroke-linejoin="round" transform="scale(1.00)"/></svg>
<div class="t" style="left:23.00px;top:96px;font-size:7.45px;color:#333;">PlayerEntity</div>
<div class="abs" style="left:0;top:107.2px;width:104.6px;height:11px;background:#e4e6f1"></div>
<div class="t" style="left:23.00px;top:108px;font-size:7.45px;color:#333;">PerspectiveCamera</div>
<div class="t" style="left:23.00px;top:120px;font-size:7.45px;color:#333;">mesh</div>
<div class="t" style="left:29.80px;top:132px;font-size:7.45px;color:#333;">boxGeometry</div>
<div class="t" style="left:29.80px;top:143px;font-size:7.45px;color:#333;">meshStandardMa...</div>
<div class="t" style="left:23.00px;top:155px;font-size:7.45px;color:#333;">pointLight</div>
<div class="t" style="left:23.00px;top:167px;font-size:7.45px;color:#333;">ambientLight</div>
<div class="abs" style="left:0;top:262px;width:104.6px;height:0.6px;background:#e2e2e2"></div>
<div class="inp" style="left:3.4px;top:266.4px;width:98.2px;height:14.2px"></div>
<div class="t" style="left:8.70px;top:269px;font-size:7.40px;color:#767676;">Filter props...</div>
<svg class="abs" style="left:3.90px;top:289.30px" width="7" height="5" viewBox="-3.5 -2.5 7 5"><path d="M-2.2 -1.1L0 1.1L2.2 -1.1" fill="none" stroke="#444" stroke-width="0.70" stroke-linecap="round" stroke-linejoin="round" transform="scale(0.95)"/></svg>
<div class="t" style="left:12.90px;top:288px;font-size:6.25px;color:#333;font-weight:bold;letter-spacing:-0.08px;-webkit-text-stroke:0;">CONSTRUCTOR</div>
<div class="t" style="left:5.50px;top:299px;font-size:7.45px;color:#333;">args</div>
<div class="inp" style="left:5.4px;top:309.4px;width:93.4px;height:13.8px"></div>
<div class="t" style="left:10.90px;top:312px;font-size:7.40px;color:#6f6f6f;">fov (number)</div>
<div class="inp" style="left:5.4px;top:326.0px;width:93.4px;height:13.8px"></div>
<div class="t" style="left:10.90px;top:329px;font-size:7.40px;color:#6f6f6f;">aspect (number)</div>
<div class="inp" style="left:5.4px;top:342.4px;width:93.4px;height:13.8px"></div>
<div class="t" style="left:10.90px;top:345px;font-size:7.40px;color:#6f6f6f;">near (number)</div>
<div class="inp" style="left:5.4px;top:358.8px;width:93.4px;height:13.8px"></div>
<div class="t" style="left:10.90px;top:362px;font-size:7.40px;color:#6f6f6f;">far (number)</div>
<div class="t" style="left:5.50px;top:378px;font-size:7.45px;color:#333;">attach</div>
<div class="inp" style="left:5.4px;top:388.2px;width:93.4px;height:13.6px"></div>
<div class="t" style="left:10.90px;top:390px;font-size:7.40px;color:#6f6f6f;">string</div>
<div class="t" style="left:5.50px;top:408px;font-size:7.45px;color:#333;font-style:italic;">name</div>
<div class="inp" style="left:5.4px;top:417.2px;width:93.4px;height:13.8px"></div>
<div class="t" style="left:10.90px;top:420px;font-size:7.40px;color:#6f6f6f;">string</div>
<svg class="abs" style="left:3.90px;top:438.90px" width="7" height="5" viewBox="-3.5 -2.5 7 5"><path d="M-2.2 -1.1L0 1.1L2.2 -1.1" fill="none" stroke="#444" stroke-width="0.70" stroke-linecap="round" stroke-linejoin="round" transform="scale(0.95)"/></svg>
<div class="t" style="left:12.90px;top:437px;font-size:6.25px;color:#333;font-weight:bold;letter-spacing:-0.08px;-webkit-text-stroke:0;">TRANSFORM</div>
<div class="t" style="left:5.50px;top:449px;font-size:7.45px;color:#333;">position</div>
<div class="abs" style="left:175.4px;top:53.8px;width:95.4px;height:14.8px;background:#f8f8f8;border:0.6px solid #e9e9e9;border-radius:2px;"></div>
<div class="abs" style="left:273.4px;top:53.8px;width:56.4px;height:14.8px;background:#f8f8f8;border:0.6px solid #e9e9e9;border-radius:2px;"></div>
<div class="abs" style="left:191.0px;top:54.3px;width:0.6px;height:13.8px;background:#e9e9e9"></div>
<div class="abs" style="left:241.7px;top:54.3px;width:0.6px;height:13.8px;background:#e9e9e9"></div>
<div class="abs" style="left:256.6px;top:54.3px;width:0.6px;height:13.8px;background:#e9e9e9"></div>
<div class="abs" style="left:300.5px;top:54.3px;width:0.6px;height:13.8px;background:#e9e9e9"></div>
<div class="abs" style="left:315.6px;top:54.3px;width:0.6px;height:13.8px;background:#e9e9e9"></div>
<div class="abs" style="left:191.8px;top:54.6px;width:12px;height:13.3px;background:#e5e5e5"></div>
<div class="abs" style="left:191.8px;top:67.5px;width:12px;height:0.9px;background:#4f9fd0"></div>
<svg class="abs" style="left:175px;top:53px" width="156" height="17" viewBox="175 53 156 17" fill="none" stroke="#4a4a4a" stroke-width="0.62" stroke-linecap="round" stroke-linejoin="round">
<g><circle cx="182.9" cy="61.3" r="3.7" fill="#555" stroke="#444" stroke-width="0.5"/><path d="M179.6 60H186.2M179.6 62.6H186.2" stroke="#d8d8d8" stroke-width="0.55"/><ellipse cx="182.9" cy="61.3" rx="1.5" ry="3.6" stroke="#bdbdbd" stroke-width="0.4"/></g>
<path d="M195.3 57.3V64L196.9 62.6L198.3 65.4L199.4 64.9L198.1 62.2L200.6 62.1Z" stroke-width="0.65"/>
<path d="M209.9 59.2V60.2M209.9 62.4V63.4M207.8 61.3H208.8M211 61.3H212" stroke-width="0.6"/><g fill="#444" stroke="none"><path d="M209.9 57.4L211 59.1H208.8Z"/><path d="M209.9 65.2L211 63.5H208.8Z"/><path d="M206 61.3L207.7 60.2V62.4Z"/><path d="M213.8 61.3L212.1 60.2V62.4Z"/></g>
<path d="M222 58.4L225.5 64.3H218.5Z"/>
<rect x="230.5" y="58" width="6.7" height="6.8" stroke-width="0.6"/><path d="M232.4 59.9L235.3 62.8" stroke-width="0.8"/><path d="M235.6 61V63.1H233.5Z" fill="#444" stroke-width="0.3"/><g fill="#444" stroke="none"><rect x="229.9" y="57.4" width="1.2" height="1.2"/><rect x="236.6" y="57.4" width="1.2" height="1.2"/><rect x="229.9" y="64.2" width="1.2" height="1.2"/><rect x="236.6" y="64.2" width="1.2" height="1.2"/></g>
<path d="M249.6 57C252.6 58 253.5 61 252.3 63.1C251.1 65.1 248.4 65.7 246.2 64.6C248.6 64.5 250.5 63 250.8 60.8C251 59.4 250.5 58 249.6 57Z" fill="#444" stroke-width="0.4"/><path d="M245.4 57.6V58.8M244.8 58.2H246M247.6 59.6V60.8M247 60.2H248.2M245.6 61.4V62.2" stroke-width="0.55"/>
<path d="M260.6 59.4H265.8L267 64.2H259.3ZM263.2 59.4V64.2M259.9 61.7H266.4"/>
<path d="M280 57.9L278.2 59.7L280 61.5" /><path d="M278.4 59.7H282C283.4 59.7 284.5 60.7 284.5 62C284.5 63.3 283.4 64.4 282 64.4H280.2"/>
<path d="M290.5 58.8L295.7 61.3L290.5 63.9Z"/>
<path d="M311.62 60.51 L311.62 62.09 L310.76 62.25 L310.53 62.79 L311.03 63.51 L309.91 64.63 L309.19 64.13 L308.65 64.36 L308.49 65.22 L306.91 65.22 L306.75 64.36 L306.21 64.13 L305.49 64.63 L304.37 63.51 L304.87 62.79 L304.64 62.25 L303.78 62.09 L303.78 60.51 L304.64 60.35 L304.87 59.81 L304.37 59.09 L305.49 57.97 L306.21 58.47 L306.75 58.24 L306.91 57.38 L308.49 57.38 L308.65 58.24 L309.19 58.47 L309.91 57.97 L311.03 59.09 L310.53 59.81 L310.76 60.35 Z" stroke-width="0.55"/>
<circle cx="307.7" cy="61.3" r="1.4" stroke-width="0.55"/>
<circle cx="322.4" cy="61.3" r="3.9"/><path d="M321.1 60.1C321.1 59.2 321.7 58.8 322.4 58.8C323.2 58.8 323.7 59.3 323.7 60C323.7 60.9 322.4 61 322.4 62.1M322.4 63.4V63.6"/>
</svg>
<div id="activity" class="abs"></div>
<svg class="abs" style="left:803px;top:19px" width="25" height="435" viewBox="803 19 25 435" fill="none" stroke="#424242" stroke-width="0.9" stroke-linecap="round" stroke-linejoin="round">
<path d="M812.4 29.4V27.6C812.4 27 812.9 26.6 813.4 26.6H818L820.6 29.2V34.6C820.6 35.2 820.2 35.6 819.6 35.6H816.8"/><path d="M817.8 26.8V29.4H820.4" stroke-width="0.7"/><rect x="808.6" y="29.6" width="8" height="9" rx="1"/>
<path d="M812.4 55.6V53L821 58.2L816.4 61.2"/><ellipse cx="811.6" cy="61.4" rx="2" ry="2.4"/><path d="M810.2 59.4L809.2 58.4M813 59.4L814 58.4M809.6 61.4H808.4M813.6 61.4H814.8M810 63.2L809 64.2M813.2 63.2L814.2 64.2M810.6 59.6H812.6" stroke-width="0.7"/>
<circle cx="816.3" cy="82.8" r="3.9"/><path d="M813.5 85.7L809.2 90.4"/>
<rect x="808.6" y="108.2" width="4.3" height="4.3" rx="0.5"/><rect x="808.6" y="112.5" width="4.3" height="4.3" rx="0.5"/><rect x="812.9" y="112.5" width="4.3" height="4.3" rx="0.5"/><rect x="816" y="105" width="4.4" height="4.4" rx="0.7"/>
<circle cx="819.3" cy="115.5" r="4.3" fill="#005fb8" stroke="none"/>
<rect x="809" y="131.6" width="5.2" height="4.8" rx="1"/><rect x="815.2" y="137.9" width="5.4" height="5" rx="1"/><path d="M811.6 136.4V139.2C811.6 140 812.2 140.4 812.8 140.4H815.2"/>
<circle cx="815" cy="414.3" r="6.2"/><circle cx="815" cy="412.3" r="2.3"/><path d="M810.8 418.8C811.4 416.6 813 415.8 815 415.8C817 415.8 818.6 416.6 819.2 418.8"/>
<path d="M820.56 439.31 L820.56 441.89 L818.99 441.99 L818.66 442.79 L819.70 443.97 L817.87 445.80 L816.69 444.76 L815.89 445.09 L815.79 446.66 L813.21 446.66 L813.11 445.09 L812.31 444.76 L811.13 445.80 L809.30 443.97 L810.34 442.79 L810.01 441.99 L808.44 441.89 L808.44 439.31 L810.01 439.21 L810.34 438.41 L809.30 437.23 L811.13 435.40 L812.31 436.44 L813.11 436.11 L813.21 434.54 L815.79 434.54 L815.89 436.11 L816.69 436.44 L817.87 435.40 L819.70 437.23 L818.66 438.41 L818.99 439.21 Z"/>
<circle cx="814.5" cy="440.6" r="2"/>
<circle cx="819.3" cy="445.2" r="4.3" fill="#005fb8" stroke="none"/>
</svg>
<div class="t" style="left:817.4px;top:110.9px;font-size:5.6px;color:#fff;font-weight:bold;line-height:9px">2</div>
<div class="t" style="left:817.6px;top:440.6px;font-size:5.6px;color:#fff;font-weight:bold;line-height:9px">1</div>
<div id="status" class="abs"></div>
<div class="abs" style="left:0;top:454.2px;width:18.4px;height:11.8px;background:#005fb8;border-bottom-left-radius:5.5px"></div>
<svg class="abs" style="left:5px;top:456px" width="9" height="9" viewBox="0 0 9 9" fill="none" stroke="#fff" stroke-width="0.8" stroke-linecap="round" stroke-linejoin="round"><path d="M2 3.2L4 5.2L2 7.2" transform="translate(0 0.4)"/><path d="M7 1.4L5 3.4L7 5.4" transform="translate(0 -0.4)"/></svg>
<svg class="abs" style="left:22px;top:455.5px" width="8" height="10" viewBox="22 455.5 8 10" fill="none" stroke="#3b3b3b" stroke-width="0.7"><circle cx="24.2" cy="457.6" r="0.95"/><circle cx="24.2" cy="463.2" r="0.95"/><circle cx="27.6" cy="458.8" r="0.95"/><path d="M24.2 458.6V462.2M27.6 459.8C27.6 461.2 24.6 461 24.3 462.2"/></svg>
<div class="t" style="left:31.80px;top:456px;font-size:7.15px;color:#3b3b3b;">landing-page-march*</div>
<svg class="abs" style="left:101px;top:455.5px" width="9" height="10" viewBox="101 455.5 9 10" fill="none" stroke="#3b3b3b" stroke-width="0.7" stroke-linecap="round"><path d="M102.8 460.2C102.8 458.4 104 457.4 105.6 457.4C106.8 457.4 107.8 458.1 108.2 459.2M108.4 460.6C108.4 462.4 107.2 463.4 105.6 463.4C104.4 463.4 103.4 462.7 103 461.6"/><path d="M108.5 457.6V459.3H106.8M102.7 463.2V461.5H104.4" stroke-width="0.6"/></svg>
<div class="t" style="left:110.60px;top:456px;font-size:7.30px;color:#3b3b3b;">0</div>
<div class="t" style="left:122.30px;top:456px;font-size:7.30px;color:#3b3b3b;">2</div>
<svg class="abs" style="left:115px;top:455.5px" width="17" height="10" viewBox="115 455.5 17 10" fill="none" stroke="#3b3b3b" stroke-width="0.7" stroke-linecap="round" stroke-linejoin="round"><path d="M118.1 457.6V462.6M116.4 461L118.1 462.7L119.8 461"/><path d="M129 462.7V457.7M127.3 459.3L129 457.6L130.7 459.3"/></svg>
<svg class="abs" style="left:138px;top:455.5px" width="9" height="10" viewBox="138 455.5 9 10" fill="none" stroke="#3b3b3b" stroke-width="0.65"><circle cx="140.3" cy="457.4" r="0.9"/><circle cx="140.3" cy="463.4" r="0.9"/><circle cx="143.6" cy="460.4" r="0.9"/><path d="M140.3 458.3V462.5M141.2 457.6C143 457.8 143.6 458.6 143.6 459.5M143.6 461.3C143.6 462.4 142.6 463 141.2 463.2M144.5 460.4H145.6"/></svg>
<svg class="abs" style="left:155px;top:455.5px" width="16" height="10" viewBox="155 455.5 16 10" fill="none" stroke="#3b3b3b" stroke-width="0.65" stroke-linecap="round" stroke-linejoin="round"><path d="M158.2 462.4C157.8 460 159 457.6 162.2 457C162.2 460 160.4 462 158.2 462.4ZM158.2 462.4L157 463.8M156.6 460.4L158 459.6M160.2 463.6L160.8 462.2M156.2 462.2L155.8 464.2L157.6 463.9"/><circle cx="160.3" cy="459.4" r="0.6"/><path d="M166.4 461.4L165.2 462.6C164.6 463.2 163.8 463.2 163.4 462.8C162.9 462.3 162.9 461.6 163.5 461L164.7 459.8M167 459.4L168.2 458.2C168.8 457.6 169.6 457.6 170 458C170.5 458.5 170.5 459.2 169.9 459.8L168.7 461M165.6 461.3L167.8 459.1"/></svg>
<div class="t" style="left:173.00px;top:456px;font-size:7.10px;color:#3b3b3b;">Launchpad</div>
<svg class="abs" style="left:215px;top:455.5px" width="40" height="10" viewBox="215 455.5 40 10" fill="none" stroke="#3b3b3b" stroke-width="0.65" stroke-linecap="round" stroke-linejoin="round"><circle cx="219.1" cy="460.3" r="3.1"/><path d="M217.8 459L220.4 461.6M220.4 459L217.8 461.6"/><path d="M235.1 457.2L238.6 463.3H231.6Z"/><path d="M235.1 459.4V461.2M235.1 462.2V462.3"/><circle cx="250.6" cy="460.3" r="3.1"/><path d="M250.6 459.9V462M250.6 458.6V458.7"/></svg>
<div class="t" style="left:225.00px;top:456px;font-size:7.30px;color:#3b3b3b;">0</div>
<div class="t" style="left:240.75px;top:456px;font-size:7.30px;color:#3b3b3b;">0</div>
<div class="t" style="left:256.25px;top:456px;font-size:7.30px;color:#3b3b3b;">2</div>
<svg class="abs" style="left:811px;top:455px" width="10" height="10" viewBox="811 455 10 10" fill="none" stroke="#3b3b3b" stroke-width="0.7" stroke-linejoin="round"><path d="M813.2 462.2C813.8 461.4 813.8 460.4 813.8 459.4C813.8 458 814.8 457 816 457C817.2 457 818.2 458 818.2 459.4C818.2 460.4 818.2 461.4 818.8 462.2Z"/><path d="M815.2 463.2C815.4 463.7 816.6 463.7 816.8 463.2"/></svg>
<svg class="abs" style="left:0;top:0" width="828" height="466" viewBox="0 0 828 466"><path d="M0 0H4.5A4.5 4.5 0 0 0 0 4.5Z" fill="#fff"/><path d="M828 0H823.5A4.5 4.5 0 0 1 828 4.5Z" fill="#fff"/><path d="M0 466H5A5 5 0 0 1 0 461Z" fill="#fff"/><path d="M828 466H823A5 5 0 0 0 828 461Z" fill="#fff"/></svg>
</body>
</html>
